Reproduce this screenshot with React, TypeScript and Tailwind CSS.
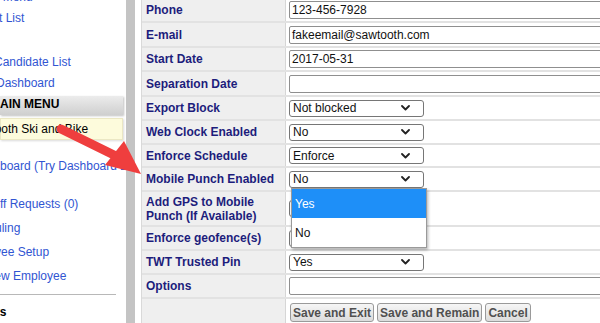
import React from "react";

const navTop = [
  { text: "Hiring Menu", cls: "-ml-[32px] h-[19px]" },
  { text: "Applicant List", cls: "-ml-[47px] h-[24px]" },
  { text: "", cls: "h-[21px]" },
  { text: "Candidate List", cls: "-ml-[6px] h-[22px]" },
  { text: "Dashboard", cls: "-ml-[4px] h-[20px]" },
];

const navBottom = [
  { text: "Dashboard (Try Dashboard 2.0)", cls: "-ml-[28px] h-[24px]" },
  { text: "", cls: "h-[14px]" },
  { text: "Time Off Requests (0)", cls: "-ml-[39px] h-[24px]" },
  { text: "Scheduling", cls: "-ml-[39px] h-[24px]" },
  { text: "Employee Setup", cls: "-ml-[39px] h-[24px]" },
  { text: "Add New Employee", cls: "-ml-[39px] h-[24px]" },
];

type Row = {
  label: string;
  h: string;
  kind: "text" | "select";
  value: string;
};

const rows: Row[] = [
  { label: "Phone", h: "h-[24px]", kind: "text", value: "123-456-7928" },
  { label: "E-mail", h: "h-[25px]", kind: "text", value: "fakeemail@sawtooth.com" },
  { label: "Start Date", h: "h-[24px]", kind: "text", value: "2017-05-31" },
  { label: "Separation Date", h: "h-[25px]", kind: "text", value: "" },
  { label: "Export Block", h: "h-[24px]", kind: "select", value: "Not blocked" },
  { label: "Web Clock Enabled", h: "h-[24px]", kind: "select", value: "No" },
  { label: "Enforce Schedule", h: "h-[23px]", kind: "select", value: "Enforce" },
  { label: "Mobile Punch Enabled", h: "h-[24px]", kind: "select", value: "No" },
  { label: "Add GPS to Mobile Punch (If Available)", h: "h-[35px]", kind: "select", value: "Yes" },
  { label: "Enforce geofence(s)", h: "h-[24px]", kind: "select", value: "No" },
  { label: "TWT Trusted Pin", h: "h-[24px]", kind: "select", value: "Yes" },
  { label: "Options", h: "h-[24px]", kind: "text", value: "" },
];

function Chevron() {
  return (
    <svg width="9" height="6" viewBox="0 0 9 6" fill="none" stroke="#222" strokeWidth="1.8">
      <path d="M1 1l3.5 3.5L8 1" strokeLinecap="round" strokeLinejoin="round" />
    </svg>
  );
}

function Select({ value }: { value: string }) {
  return (
    <div className="flex h-[17px] w-[135px] items-center justify-between rounded-[3px] border border-[#767676] bg-white pl-[3px] pr-[13px] text-[12px] text-[#111]">
      <span>{value}</span>
      <Chevron />
    </div>
  );
}

function TextInput({ value }: { value: string }) {
  return (
    <div className="flex h-[18px] w-[340px] shrink-0 items-center rounded-[2px] border border-[#8f8f8f] bg-white pl-[2px] text-[12px] text-[#111]">
      {value}
    </div>
  );
}

function Btn({ children }: { children: React.ReactNode }) {
  return (
    <button className="h-[19px] rounded-[3px] border border-[#9a9a9a] bg-gradient-to-b from-[#f6f6f6] to-[#dcdcdc] px-[2px] text-[12px] font-bold leading-none text-[#505050]">
      {children}
    </button>
  );
}

export default function App() {
  return (
    <div className="relative flex h-[323px] w-[600px] overflow-hidden bg-white font-['Liberation_Sans',Arial,sans-serif]">
      {/* left menu, scrolled off to the left */}
      <div className="flex w-[126px] shrink-0 flex-col overflow-hidden text-[12px] text-[#3155d2]">
        <div className="-mt-[13px] flex flex-col">
          {navTop.map((n, i) => (
            <div key={i} className={`flex items-center whitespace-nowrap ${n.cls}`}>
              {n.text}
            </div>
          ))}
        </div>
        <div className="mt-[3px] flex h-[19px] w-[123px] items-center whitespace-nowrap bg-gradient-to-b from-[#ececec] to-[#cfcfcf] pb-[3px] font-bold text-black shadow-[1px_1px_2px_rgba(0,0,0,0.25)]">
          <span className="-ml-[10px]">MAIN MENU</span>
        </div>
        <div className="mt-[3px] flex h-[22px] w-[123px] items-center whitespace-nowrap border border-[#ebe7c4] bg-[#fdfbdc] text-black shadow-[1px_1px_2px_rgba(0,0,0,0.15)]">
          <span className="-ml-[33px]">Sawtooth Ski and Bike</span>
        </div>
        <div className="mt-[14px] flex flex-col">
          {navBottom.map((n, i) => (
            <div key={i} className={`flex items-center whitespace-nowrap ${n.cls}`}>
              {n.text}
            </div>
          ))}
        </div>
        <div className="mt-[6px] h-px w-[116px] bg-[#b8b8b8]" />
        <div className="mt-[8px] -ml-[39px] whitespace-nowrap font-bold text-black">Reports</div>
      </div>

      {/* scrollbar-like gutter */}
      <div className="w-[9px] shrink-0 bg-[#c4c4c4]" />
      <div className="w-[6px] shrink-0 bg-white" />

      {/* form table */}
      <div className="relative -mt-px flex flex-1 flex-col border-l border-[#d9d9d9]">
        {rows.map((r) => (
          <div key={r.label} className={`flex shrink-0 border-b-2 border-[#e2e2e2] ${r.h}`}>
            <div className="flex w-[144px] shrink-0 items-center border-r border-[#d6d6d6] bg-[#efefef] pl-[4px] text-[12px] font-bold leading-[14px] text-[#1d1d7c]">
              {r.label}
            </div>
            <div className="flex flex-1 items-center overflow-hidden pl-[3px]">
              {r.kind === "text" ? <TextInput value={r.value} /> : <Select value={r.value} />}
            </div>
          </div>
        ))}
        <div className="flex flex-1">
          <div className="w-[144px] shrink-0 border-r border-[#d6d6d6] bg-[#efefef]" />
          <div className="flex flex-1 gap-[3px] pl-[4px] pt-[4px]">
            <Btn>Save and Exit</Btn>
            <Btn>Save and Remain</Btn>
            <Btn>Cancel</Btn>
          </div>
        </div>

        {/* open dropdown list for Mobile Punch Enabled */}
        <div className="absolute left-[149px] top-[189px] flex w-[136px] flex-col border border-[#9a9a9a] bg-white text-[12px] shadow-[1px_2px_3px_rgba(0,0,0,0.3)]">
          <div className="flex h-[29px] items-center bg-[#1e8ff8] pl-[3px] text-white">Yes</div>
          <div className="flex h-[29px] items-center pl-[3px] text-[#111]">No</div>
        </div>
      </div>

      {/* red annotation arrow */}
      <svg className="absolute left-[50px] top-[110px]" width="100" height="75" viewBox="0 0 100 75">
        <line x1="11" y1="19" x2="68" y2="47" stroke="#ef3e3e" strokeWidth="9" strokeLinecap="round" />
        <polygon points="91,64 55,55 74,31" fill="#ef3e3e" />
      </svg>
    </div>
  );
}
